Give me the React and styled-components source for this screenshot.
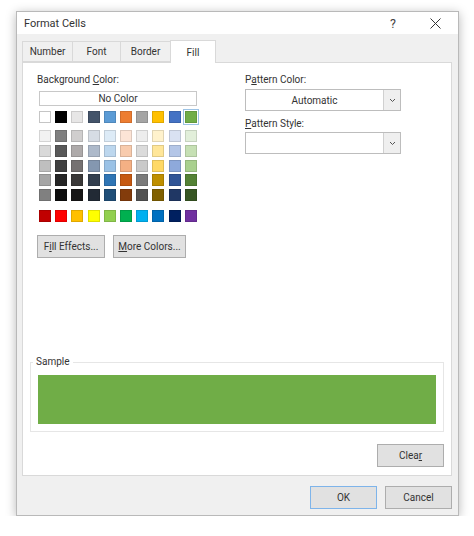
import React from 'react';
import styled, { createGlobalStyle } from 'styled-components';

const GlobalStyle = createGlobalStyle`
  body {
    margin: 0;
    background: #ffffff;
    font-family: Roboto, "Open Sans", sans-serif;
    color: #222;
  }
`;

const Page = styled.div`
  padding: 11px 0 0 16px;
`;

const Window = styled.div`
  width: 443px;
  height: 505px;
  border: 1px solid #b9b9b9;
  box-shadow: 0 2px 10px rgba(0, 0, 0, 0.28);
  background: #f0f0f0;
  display: flex;
  flex-direction: column;
  box-sizing: border-box;
`;

const TitleBar = styled.div`
  height: 22px;
  background: #fff;
  display: flex;
  align-items: center;
  padding-left: 7px;
  font-size: 11px;
  color: #333;
`;

const TitleText = styled.div`
  flex: 1;
`;

const TitleButton = styled.div`
  width: ${p => p.w}px;
  display: flex;
  justify-content: center;
  align-items: center;
  font-size: 12.5px;
  color: #444;
`;

const Body = styled.div`
  flex: 1;
  padding: 7px 6px 0 5px;
  display: flex;
  flex-direction: column;
`;

const Tabs = styled.div`
  display: flex;
  align-items: flex-end;
  height: 21px;
  position: relative;
  z-index: 1;
`;

const Tab = styled.div`
  width: ${p => p.w}px;
  height: ${p => (p.active ? 23 : 21)}px;
  box-sizing: border-box;
  border: 1px solid #d9d9d9;
  border-bottom: ${p => (p.active ? 'none' : '1px solid #d9d9d9')};
  border-right: ${p => (p.active ? '1px solid #d9d9d9' : 'none')};
  background: ${p => (p.active ? '#fff' : '#f0f0f0')};
  display: flex;
  align-items: center;
  justify-content: center;
  font-size: 10px;
  color: #333;
  margin-bottom: ${p => (p.active ? '-1px' : '0')};
`;

const Panel = styled.div`
  height: 414px;
  box-sizing: border-box;
  background: #fff;
  border: 1px solid #d9d9d9;
  display: flex;
  flex-direction: column;
  padding-bottom: 8px;
`;

const TopArea = styled.div`
  display: flex;
  padding: 10px 0 0 14px;
`;

const LeftCol = styled.div`
  width: 208px;
  display: flex;
  flex-direction: column;
`;

const RightCol = styled.div`
  display: flex;
  flex-direction: column;
`;

const Label = styled.div`
  font-size: 10px;
  color: #333;
  line-height: 14px;
  margin-bottom: ${p => p.mb || 0}px;
`;

const NoColor = styled.div`
  width: 158px;
  height: 15px;
  box-sizing: border-box;
  border: 1px solid #c8c8c8;
  margin-left: 2px;
  display: flex;
  align-items: center;
  justify-content: center;
  font-size: 10px;
  color: #333;
`;

const SwatchGrid = styled.div`
  display: grid;
  grid-template-columns: repeat(10, 12px);
  column-gap: 4.2px;
  row-gap: 2.8px;
  margin: ${p => p.m};
`;

const Swatch = styled.div`
  width: 12px;
  height: 12px;
  box-sizing: border-box;
  background: ${p => p.c};
  border: 1px solid ${p => (p.c === '#FFFFFF' ? '#c5c5c5' : 'rgba(0,0,0,0.12)')};
  outline: ${p => (p.selected ? '1px solid #9cc3e5' : 'none')};
  outline-offset: 1px;
`;

const ButtonRow = styled.div`
  display: flex;
  gap: 8px;
  margin-top: 13px;
`;

const Button = styled.div`
  width: ${p => p.w}px;
  height: 23px;
  box-sizing: border-box;
  background: #e1e1e1;
  border: 1px solid ${p => (p.primary ? '#7eb4ea' : '#adadad')};
  display: flex;
  align-items: center;
  justify-content: center;
  font-size: 10px;
  color: #333;
`;

const Select = styled.div`
  width: 156px;
  height: 22px;
  box-sizing: border-box;
  border: 1px solid #bdbdbd;
  display: flex;
  font-size: 10px;
  color: #333;
  margin-bottom: ${p => p.mb || 0}px;
`;

const SelectValue = styled.div`
  flex: 1;
  display: flex;
  align-items: center;
  justify-content: center;
`;

const SelectArrow = styled.div`
  width: 16px;
  border-left: 1px solid #d0d0d0;
  background: #efefef;
  display: flex;
  align-items: center;
  justify-content: center;
`;

const U = styled.span`
  text-decoration: underline;
`;

const SampleBox = styled.fieldset`
  margin: auto 7px 0 7px;
  padding: 7px 7px 7px 7px;
  border: 1px solid #e6e6e6;
  min-width: 0;
`;

const Legend = styled.legend`
  font-size: 10px;
  color: #333;
  padding: 0 3px;
  margin-left: -5px;
  line-height: 12px;
`;

const SampleFill = styled.div`
  height: 49px;
  background: #70ad47;
`;

const ClearRow = styled.div`
  display: flex;
  justify-content: flex-end;
  margin: 12px 7px 0 0;
`;

const Footer = styled.div`
  display: flex;
  justify-content: flex-end;
  gap: 8px;
  padding: 10px 0 0 0;
`;

const theme = ['#FFFFFF', '#000000', '#E7E6E6', '#44546A', '#5B9BD5', '#ED7D31', '#A5A5A5', '#FFC000', '#4472C4', '#70AD47'];

const shades = [
  ['#F2F2F2', '#7F7F7F', '#D0CECE', '#D6DCE4', '#DDEBF7', '#FCE4D6', '#EDEDED', '#FFF2CC', '#D9E1F2', '#E2EFDA'],
  ['#D9D9D9', '#595959', '#AEAAAA', '#ADB9CA', '#BDD7EE', '#F8CBAD', '#DBDBDB', '#FFE699', '#B4C6E7', '#C6E0B4'],
  ['#BFBFBF', '#404040', '#757171', '#8497B0', '#9BC2E6', '#F4B084', '#C9C9C9', '#FFD966', '#8EA9DB', '#A9D08E'],
  ['#A6A6A6', '#262626', '#3A3838', '#333F4F', '#2F75B5', '#C65911', '#7B7B7B', '#BF8F00', '#305496', '#548235'],
  ['#808080', '#0D0D0D', '#171616', '#222A35', '#1F4E78', '#833C0C', '#525252', '#806000', '#203764', '#375623'],
];

const standard = ['#C00000', '#FF0000', '#FFC000', '#FFFF00', '#92D050', '#00B050', '#00B0F0', '#0070C0', '#002060', '#7030A0'];

const Chevron = () => (
  <svg width="7" height="5" viewBox="0 0 7 5">
    <path d="M1 1 L3.5 3.5 L6 1" fill="none" stroke="#555" strokeWidth="1" />
  </svg>
);

const CloseIcon = () => (
  <svg width="11" height="11" viewBox="0 0 11 11">
    <path d="M0.5 0.5 L10.5 10.5 M10.5 0.5 L0.5 10.5" stroke="#333" strokeWidth="1" />
  </svg>
);

const App = () => {
  return (
    <Page>
      <GlobalStyle />
      <Window>
        <TitleBar>
          <TitleText>Format Cells</TitleText>
          <TitleButton w={40}>?</TitleButton>
          <TitleButton w={45}><CloseIcon /></TitleButton>
        </TitleBar>
        <Body>
          <Tabs>
            <Tab w={50}>Number</Tab>
            <Tab w={48}>Font</Tab>
            <Tab w={50}>Border</Tab>
            <Tab w={46} active>Fill</Tab>
          </Tabs>
          <Panel>
            <TopArea>
              <LeftCol>
                <Label mb={4}>Background <U>C</U>olor:</Label>
                <NoColor>No Color</NoColor>
                <SwatchGrid m="5px 0 0 2px">
                  {theme.map((c, i) => <Swatch key={i} c={c} selected={i === 9} />)}
                </SwatchGrid>
                <SwatchGrid m="7px 0 0 2px">
                  {shades.flat().map((c, i) => <Swatch key={i} c={c} />)}
                </SwatchGrid>
                <SwatchGrid m="9px 0 0 2px">
                  {standard.map((c, i) => <Swatch key={i} c={c} />)}
                </SwatchGrid>
                <ButtonRow>
                  <Button w={68}>F<U>i</U>ll Effects...</Button>
                  <Button w={73}><U>M</U>ore Colors...</Button>
                </ButtonRow>
              </LeftCol>
              <RightCol>
                <Label mb={2}>P<U>a</U>ttern Color:</Label>
                <Select mb={6}>
                  <SelectValue>Automatic</SelectValue>
                  <SelectArrow><Chevron /></SelectArrow>
                </Select>
                <Label mb={1}><U>P</U>attern Style:</Label>
                <Select>
                  <SelectValue />
                  <SelectArrow><Chevron /></SelectArrow>
                </Select>
              </RightCol>
            </TopArea>
            <SampleBox>
              <Legend>Sample</Legend>
              <SampleFill />
            </SampleBox>
            <ClearRow>
              <Button w={67}>Clea<U>r</U></Button>
            </ClearRow>
          </Panel>
          <Footer>
            <Button w={67} primary>OK</Button>
            <Button w={67}>Cancel</Button>
          </Footer>
        </Body>
      </Window>
    </Page>
  );
};

export default App;
